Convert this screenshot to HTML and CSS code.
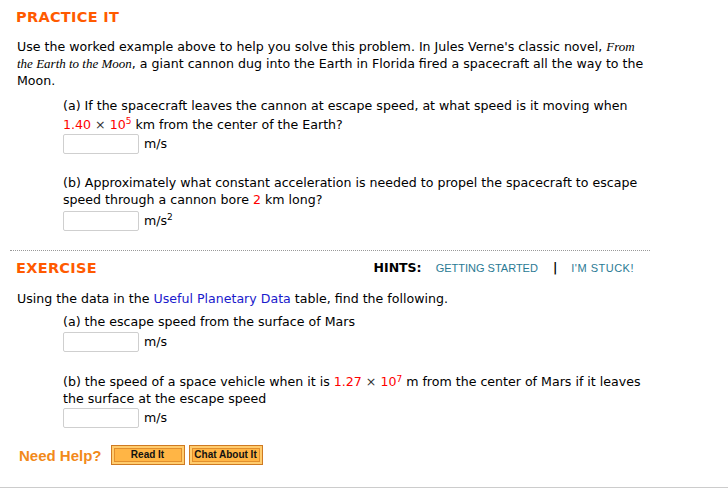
FILE: index.html
```html
<!DOCTYPE html>
<html>
<head>
<meta charset="utf-8">
<link rel="stylesheet" href="styles.css">
</head>
<body>
<div class="page">
  <section class="practice">
    <h2 class="title">PRACTICE IT</h2>
    <p class="intro">Use the worked example above to help you solve this problem. In Jules Verne's classic novel, <i class="book">From the Earth to the Moon</i>, a giant cannon dug into the Earth in Florida fired a spacecraft all the way to the Moon.</p>
    <div class="part first">
      <p class="q">(a) If the spacecraft leaves the cannon at escape speed, at what speed is it moving when <span class="red">1.40</span> <span class="times">×</span> <span class="red">10<sup class="tall">5</sup></span> km from the center of the Earth?</p>
      <div class="answer"><span class="box"></span><span class="unit">m/s</span></div>
    </div>
    <div class="part second">
      <p class="q">(b) Approximately what constant acceleration is needed to propel the spacecraft to escape speed through a cannon bore <span class="red">2</span> km long?</p>
      <div class="answer lower"><span class="box"></span><span class="unit">m/s<sup>2</sup></span></div>
    </div>
  </section>
  <hr class="dots">
  <section class="exercise">
    <div class="exhead">
      <h2 class="title">EXERCISE</h2>
      <div class="hints"><b class="hl">HINTS:</b><span class="hlink">GETTING STARTED</span><span class="bar">|</span><span class="hlink stuck">I'M STUCK!</span></div>
    </div>
    <p class="intro">Using the data in the <span class="link">Useful Planetary Data</span> table, find the following.</p>
    <div class="part first">
      <p class="q">(a) the escape speed from the surface of Mars</p>
      <div class="answer"><span class="box"></span><span class="unit">m/s</span></div>
    </div>
    <div class="part">
      <p class="q">(b) the speed of a space vehicle when it is <span class="red">1.27</span> <span class="times">×</span> <span class="red">10<sup class="sm">7</sup></span> m from the center of Mars if it leaves the surface at the escape speed</p>
      <div class="answer"><span class="box"></span><span class="unit">m/s</span></div>
    </div>
    <div class="help">
      <span class="need">Need Help?</span>
      <span class="btn">Read It</span>
      <span class="btn">Chat About It</span>
    </div>
  </section>
  <hr class="rule">
</div>
</body>
</html>
```
FILE: styles.css
```css
* { box-sizing: border-box; }
body {
  margin: 0;
  background: #fff;
  font-family: "DejaVu Sans", Verdana, sans-serif;
  font-size: 12.6px;
  color: #000;
}
.page { padding: 8px 0 0 0; }
.practice, .exercise { padding: 0 78px 0 17px; }
.title {
  margin: 0;
  font-size: 14.5px;
  font-weight: bold;
  color: #ff5a00;
  line-height: 18px;
  letter-spacing: 0.3px;
}
.practice .title { margin-left: -1px; }
.intro {
  margin: 11.5px 0 0 0;
  line-height: 17px;
}
.book {
  font-family: "Liberation Serif", "Times New Roman", serif;
  font-size: 13px;
}
.part { margin: 19px 0 0 46px; }
.part.first { margin-top: 8px; }
.part.second { margin-top: 20px; }
.q { margin: 0; line-height: 17px; }
.red { color: #ff0000; }
.times { color: #333; }
sup { font-size: 9px; line-height: 1; vertical-align: 5px; }
sup.tall { line-height: 15px; }
sup.sm { vertical-align: 4px; }
.answer { display: flex; align-items: center; gap: 5px; margin-top: 1.5px; }
.answer.lower { margin-top: 2.5px; }
.box {
  display: inline-block;
  width: 76px;
  height: 20px;
  border: 1px solid #cfcfcf;
  border-radius: 2px;
  background: #fff;
}
.unit { line-height: 18px; }
.dots {
  border: 0;
  border-top: 1px dotted #999;
  margin: 19px 78px 0 10px;
  height: 0;
}
.exhead {
  display: flex;
  align-items: center;
  justify-content: space-between;
  width: 618px;
  margin-top: 8px;
  margin-left: -1px;
}
.hints {
  display: flex;
  align-items: center;
}
.hl { font-family: "DejaVu Sans", Verdana, sans-serif; font-size: 12.5px; font-weight: bold; margin-right: 14px; }
.hlink { font-family: "Liberation Sans", Arial, sans-serif; color: #2a7a94; font-size: 11px; }
.stuck { letter-spacing: 0.5px; }
.bar { font-weight: bold; color: #000; font-size: 12px; margin: 0 14px 0 15px; }
.exercise .intro { margin-top: 13.5px; }
.exercise .part.first { margin-top: 6px; }
.exercise .part { margin-top: 21px; }
.link { color: #1a1acc; }
.help {
  display: flex;
  align-items: center;
  gap: 4px;
  margin-top: 17px;
  margin-left: 2px;
}
.need {
  font-family: "Liberation Sans", Arial, sans-serif;
  font-weight: bold;
  font-size: 15px;
  color: #f28a1a;
  margin-right: 5px;
}
.btn {
  display: inline-block;
  height: 20px;
  width: 74px;
  border: 1px solid #cf7a22;
  box-shadow: inset 0 0 0 2px #ffcc6e, inset 0 0 0 3px #e28f2c;
  background: #ffb545;
  font-family: "Liberation Sans", Arial, sans-serif;
  font-weight: bold;
  font-size: 10px;
  line-height: 18px;
  text-align: center;
  color: #111;
}
.rule {
  border: 0;
  border-top: 1px solid #ccc;
  margin: 22px 0 0 0;
}
```
